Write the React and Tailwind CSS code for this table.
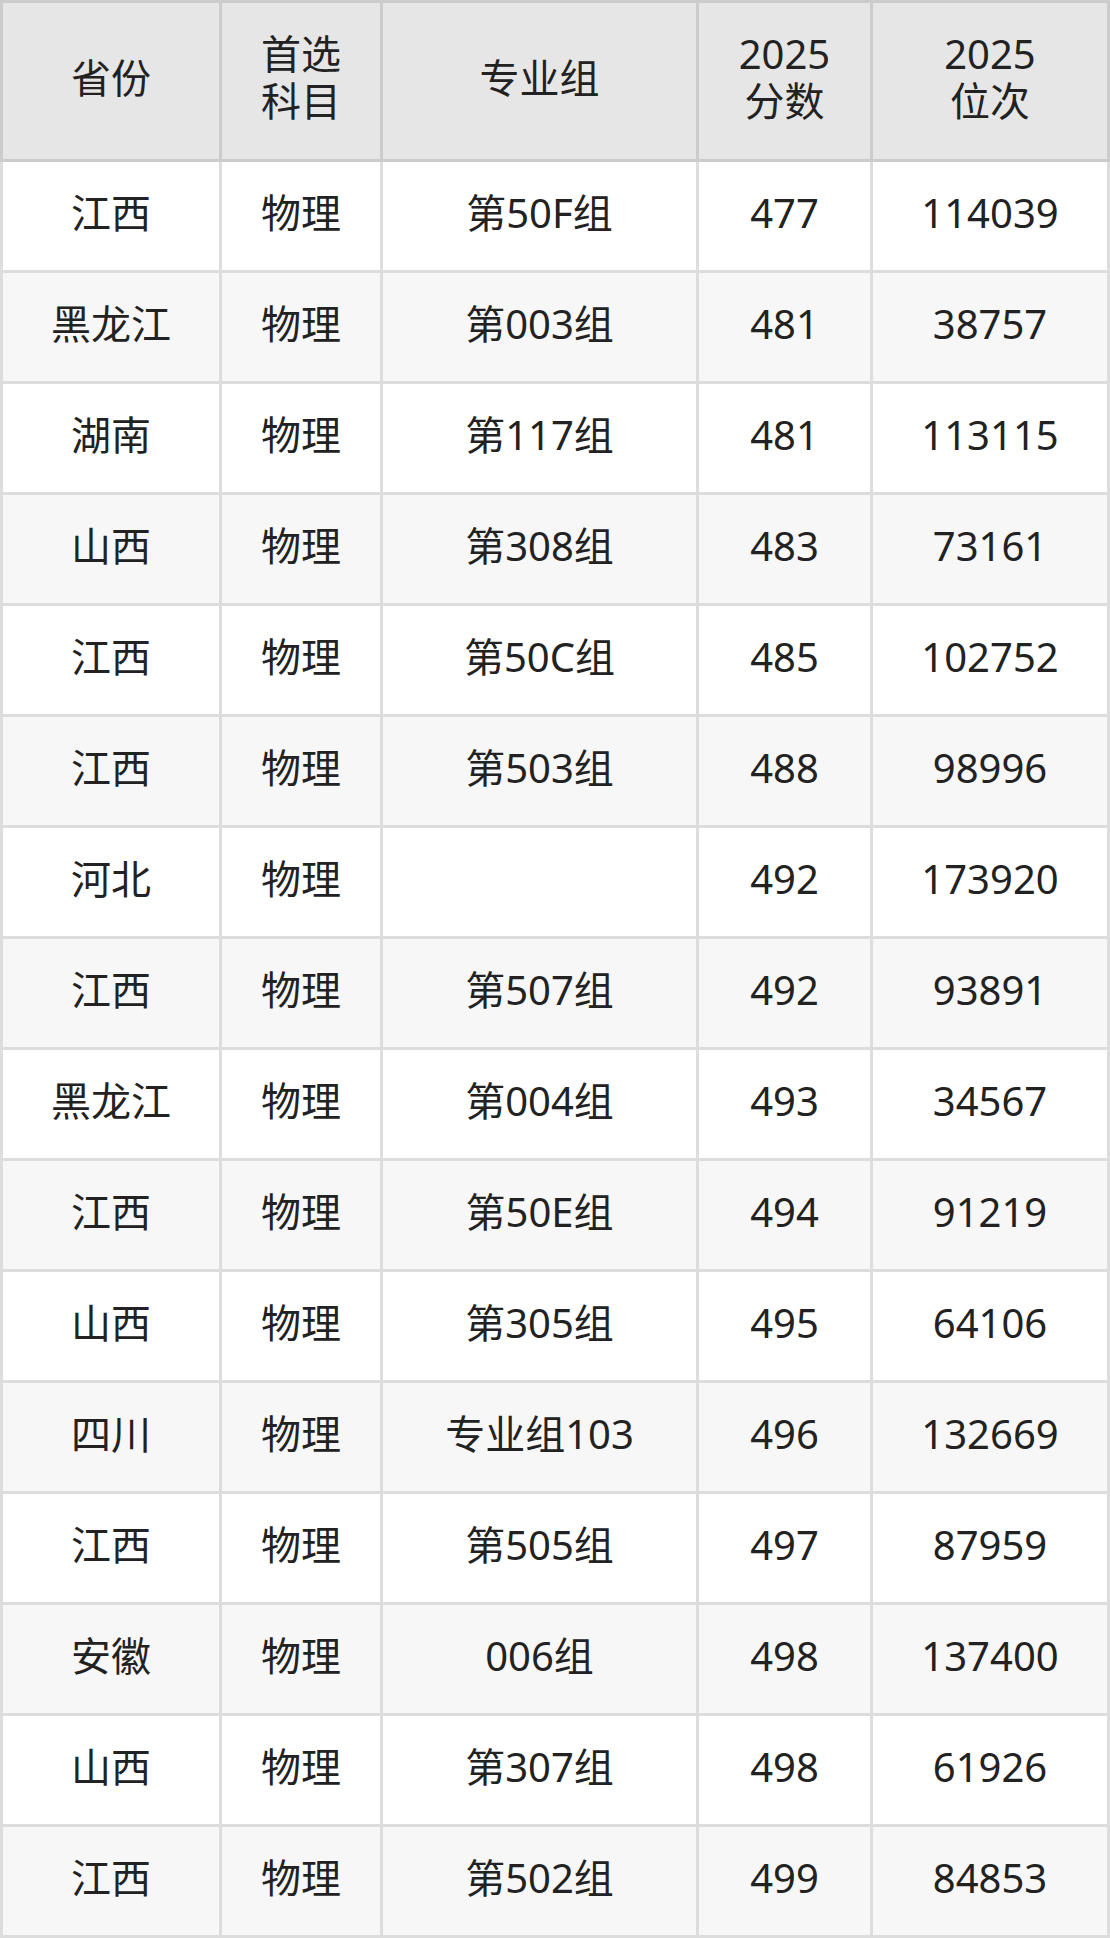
import React from "react";

const rows = [
  ["江西", "物理", "第50F组", "477", "114039"],
  ["黑龙江", "物理", "第003组", "481", "38757"],
  ["湖南", "物理", "第117组", "481", "113115"],
  ["山西", "物理", "第308组", "483", "73161"],
  ["江西", "物理", "第50C组", "485", "102752"],
  ["江西", "物理", "第503组", "488", "98996"],
  ["河北", "物理", "", "492", "173920"],
  ["江西", "物理", "第507组", "492", "93891"],
  ["黑龙江", "物理", "第004组", "493", "34567"],
  ["江西", "物理", "第50E组", "494", "91219"],
  ["山西", "物理", "第305组", "495", "64106"],
  ["四川", "物理", "专业组103", "496", "132669"],
  ["江西", "物理", "第505组", "497", "87959"],
  ["安徽", "物理", "006组", "498", "137400"],
  ["山西", "物理", "第307组", "498", "61926"],
  ["江西", "物理", "第502组", "499", "84853"],
];

const font = { fontFamily: '"Noto Sans", "Noto Sans CJK SC", sans-serif' };

export default function App() {
  return (
    <div className="w-[1110px] text-[40px] leading-[47px] text-[#222222]" style={font}>
      <div className="grid grid-cols-[216px_158px_313px_171px_234px] gap-[3px] bg-[#cccccc] p-[3px]">
        {["省份", "首选\n科目", "专业组", "2025\n分数", "2025\n位次"].map((h, i) => (
          <div key={i} className="h-[156px] pb-2 bg-[#e6e6e6] flex items-center justify-center text-center whitespace-pre-line">
            {h}
          </div>
        ))}
      </div>
      <div className="grid grid-cols-[216px_158px_313px_171px_234px] gap-[3px] bg-[#dddddd] px-[3px] pb-[3px]">
        {rows.map((r, ri) =>
          r.map((c, ci) => (
            <div
              key={ri + "-" + ci}
              className={
                "h-[108px] pb-2 flex items-center justify-center text-center " +
                (ri % 2 === 0 ? "bg-white" : "bg-[#f7f7f7]")
              }
            >
              {c}
            </div>
          ))
        )}
      </div>
    </div>
  );
}
